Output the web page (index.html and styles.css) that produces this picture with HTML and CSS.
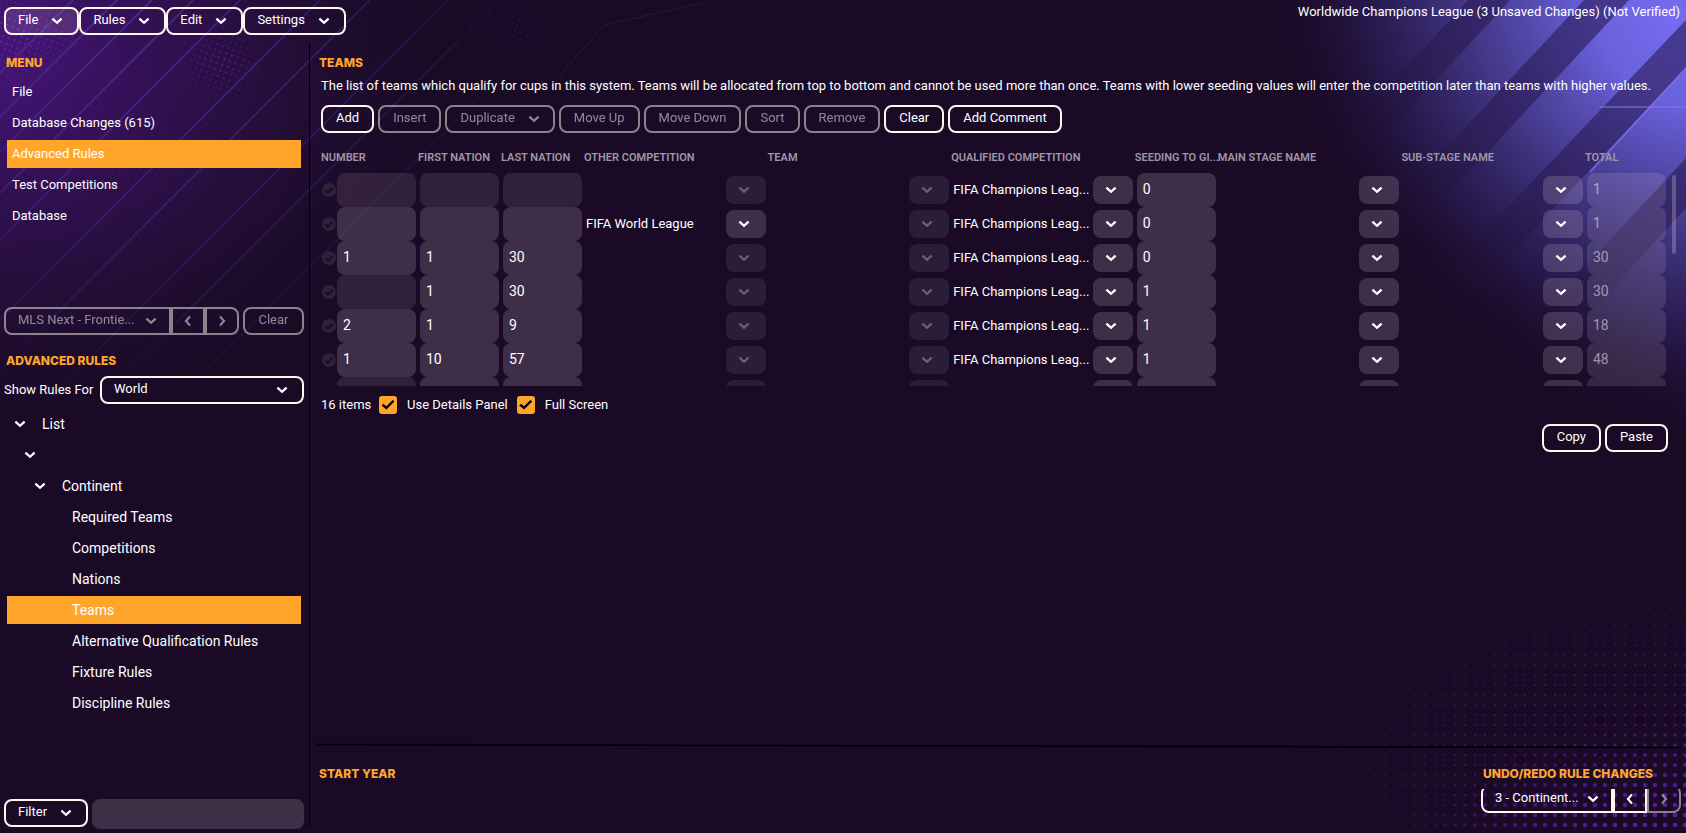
FILE: index.html
```html
<!DOCTYPE html>
<html lang="en">
<head>
<meta charset="utf-8">
<title>Worldwide Champions League</title>
<link rel="stylesheet" href="styles.css">
</head>
<body>
<svg class="defs" aria-hidden="true">
  <symbol id="chev" viewBox="0 0 12 12"><path d="M1.4 3.6 L6 7.8 L10.6 3.6" fill="none" stroke="currentColor" stroke-width="2.3"/></symbol>
  <symbol id="left" viewBox="0 0 12 12"><path d="M8 1.4 L4 6 L8 10.6" fill="none" stroke="currentColor" stroke-width="2.2"/></symbol>
  <symbol id="right" viewBox="0 0 12 12"><path d="M4 1.4 L8 6 L4 10.6" fill="none" stroke="currentColor" stroke-width="2.2"/></symbol>
  <symbol id="tick" viewBox="0 0 14 14"><circle cx="7" cy="7" r="7" fill="#2f2139"/><path d="M3.6 7.4 L6 9.6 L10.6 4.8" fill="none" stroke="#1b0c25" stroke-width="2"/></symbol>
</svg>

<svg class="backdrop" viewBox="0 0 1686 833" preserveAspectRatio="none" aria-hidden="true">
  <defs>
    <radialGradient id="purple" gradientUnits="userSpaceOnUse" cx="0" cy="0" r="1" gradientTransform="translate(-20 50) scale(480 390)">
      <stop offset="0" stop-color="#48167c"/><stop offset=".3" stop-color="#391260" stop-opacity=".9"/><stop offset=".65" stop-color="#28103f" stop-opacity=".7"/><stop offset="1" stop-color="#1a0a26" stop-opacity="0"/>
    </radialGradient>
    <radialGradient id="blue" gradientUnits="userSpaceOnUse" cx="0" cy="0" r="1" gradientTransform="translate(1675 20) rotate(-42) scale(370 480)">
      <stop offset="0" stop-color="#756cf0"/><stop offset=".2" stop-color="#6a61dc"/><stop offset=".5" stop-color="#4a3f98" stop-opacity=".85"/><stop offset=".75" stop-color="#2e2160" stop-opacity=".65"/><stop offset="1" stop-color="#1c0c30" stop-opacity="0"/>
    </radialGradient>
    <radialGradient id="bandFill" gradientUnits="userSpaceOnUse" cx="1686" cy="0" r="420">
      <stop offset="0" stop-color="#34256c" stop-opacity=".7"/><stop offset=".5" stop-color="#28184e" stop-opacity=".6"/><stop offset="1" stop-color="#1c0c2c" stop-opacity="0"/>
    </radialGradient>
    <radialGradient id="lineFade" gradientUnits="userSpaceOnUse" cx="120" cy="0" r="430">
      <stop offset="0" stop-color="#5a35a8" stop-opacity=".6"/><stop offset=".5" stop-color="#48309a" stop-opacity=".38"/><stop offset="1" stop-color="#3a2580" stop-opacity="0"/>
    </radialGradient>
    <pattern id="dots" width="10" height="10" patternUnits="userSpaceOnUse"><circle cx="5" cy="5" r="2.3" fill="#5a1a9c"/></pattern>
    <pattern id="fine" width="6" height="6" patternUnits="userSpaceOnUse" patternTransform="rotate(20)"><circle cx="3" cy="3" r="1.2" fill="#6a22b0"/></pattern>
    <pattern id="mini" width="10" height="10" patternUnits="userSpaceOnUse"><circle cx="5" cy="5" r="1.3" fill="#4c1888"/></pattern>
    <radialGradient id="fade"><stop offset="0" stop-color="#fff"/><stop offset="1" stop-color="#fff" stop-opacity="0"/></radialGradient>
    <radialGradient id="plateau"><stop offset=".4" stop-color="#fff"/><stop offset="1" stop-color="#fff" stop-opacity="0"/></radialGradient>
    <mask id="corner" maskUnits="userSpaceOnUse" x="0" y="0" width="1686" height="833"><ellipse cx="1710" cy="850" rx="290" ry="130" fill="url(#plateau)"/></mask>
    <mask id="wide" maskUnits="userSpaceOnUse" x="0" y="0" width="1686" height="833"><ellipse cx="1670" cy="770" rx="400" ry="210" fill="url(#fade)"/></mask>
    <mask id="tops" maskUnits="userSpaceOnUse" x="0" y="0" width="1686" height="833"><ellipse cx="10" cy="35" rx="85" ry="50" fill="url(#fade)"/><ellipse cx="222" cy="62" rx="50" ry="46" fill="url(#fade)" opacity=".65"/><ellipse cx="515" cy="25" rx="50" ry="34" fill="url(#fade)" opacity=".25"/><ellipse cx="110" cy="170" rx="260" ry="120" fill="url(#fade)" opacity=".2"/></mask>
  </defs>
  <rect width="1686" height="833" fill="#1a0a26"/>
  <rect width="620" height="480" fill="url(#purple)"/>
  <rect width="620" height="300" fill="url(#fine)" mask="url(#tops)"/>
  <g stroke="url(#lineFade)" stroke-width="2">
    <path d="M73 0L0 73M117 0L0 117M152 0L0 152M193 0L0 193M240 0L0 240M320 0L0 320M370 0L0 370M448 0L40 408M499 0L90 409M577 0L190 387"/>
  </g>
  <path d="M560 75L604 25L702 3" fill="none" stroke="#3a2560" stroke-opacity=".5"/>
  <rect x="1150" width="536" height="520" fill="url(#blue)"/>
  <g fill="url(#bandFill)">
    <path d="M1348 0H1380L1200 190H1168Z" opacity=".4"/>
    <path d="M1468 0H1510L1290 240H1248Z"/>
    <path d="M1584 0H1629L1350 300H1305Z"/>
    <path d="M1686 20V68L1420 350H1372Z"/>
    <path d="M1686 158V208L1560 345H1512Z"/>
  </g>
  <path d="M1686 68L1590 172" stroke="#8478f0" stroke-opacity=".6" stroke-width="2"/>
  <path d="M1600 107H1686" stroke="#8478f0" stroke-opacity=".5" stroke-width="2"/>
  <rect x="1200" y="500" width="486" height="333" fill="url(#mini)" mask="url(#wide)"/>
  <rect x="1300" y="660" width="386" height="173" fill="url(#dots)" mask="url(#corner)"/>
</svg>

<header class="topbar">
  <nav class="menus" aria-label="Main">
    <button class="btn menu lit">File<svg class="ic"><use href="#chev"/></svg></button>
    <button class="btn menu">Rules<svg class="ic"><use href="#chev"/></svg></button>
    <button class="btn menu">Edit<svg class="ic"><use href="#chev"/></svg></button>
    <button class="btn menu">Settings<svg class="ic"><use href="#chev"/></svg></button>
  </nav>
  <p class="status">Worldwide Champions League (3 Unsaved Changes) (Not Verified)</p>
</header>

<div class="shell">
  <aside class="side">
    <h2>Menu</h2>
    <ul class="list primary">
      <li><a href="#">File</a></li>
      <li><a href="#">Database Changes (615)</a></li>
      <li><a href="#" class="on">Advanced Rules</a></li>
      <li><a href="#">Test Competitions</a></li>
      <li><a href="#">Database</a></li>
    </ul>
    <div class="row history">
      <div class="group dim">
        <button class="seg grow" disabled><span>MLS Next - Frontie...</span><svg class="ic"><use href="#chev"/></svg></button>
        <button class="seg" disabled aria-label="Previous"><svg class="ic"><use href="#left"/></svg></button>
        <button class="seg" disabled aria-label="Next"><svg class="ic"><use href="#right"/></svg></button>
      </div>
      <button class="btn" disabled>Clear</button>
    </div>
    <h2>Advanced Rules</h2>
    <div class="row scope">
      <label for="scope">Show Rules For</label>
      <div class="pick"><select id="scope"><option>World</option></select><svg class="ic"><use href="#chev"/></svg></div>
    </div>
    <ul class="list tree">
      <li><a href="#" class="l1"><svg class="ic"><use href="#chev"/></svg>List</a></li>
      <li><a href="#" class="l2" aria-label="Group"><svg class="ic"><use href="#chev"/></svg></a></li>
      <li><a href="#" class="l3"><svg class="ic"><use href="#chev"/></svg>Continent</a></li>
      <li><a href="#" class="l4">Required Teams</a></li>
      <li><a href="#" class="l4">Competitions</a></li>
      <li><a href="#" class="l4">Nations</a></li>
      <li><a href="#" class="l4 on">Teams</a></li>
      <li><a href="#" class="l4">Alternative Qualification Rules</a></li>
      <li><a href="#" class="l4">Fixture Rules</a></li>
      <li><a href="#" class="l4">Discipline Rules</a></li>
    </ul>
    <div class="row filter">
      <button class="btn menu">Filter<svg class="ic"><use href="#chev"/></svg></button>
      <input type="text" aria-label="Filter">
    </div>
  </aside>

  <main class="main">
    <h2>Teams</h2>
    <p class="desc">The list of teams which qualify for cups in this system. Teams will be allocated from top to bottom and cannot be used more than once. Teams with lower seeding values will enter the competition later than teams with higher values.</p>
    <div class="tools">
      <button class="btn">Add</button>
      <button class="btn" disabled>Insert</button>
      <button class="btn menu" disabled>Duplicate<svg class="ic"><use href="#chev"/></svg></button>
      <button class="btn" disabled>Move Up</button>
      <button class="btn" disabled>Move Down</button>
      <button class="btn" disabled>Sort</button>
      <button class="btn" disabled>Remove</button>
      <button class="btn">Clear</button>
      <button class="btn">Add Comment</button>
    </div>

    <div class="gridwrap">
      <div class="clip">
      <table>
        <colgroup><col class="num"><col class="sm"><col class="sm"><col><col><col><col class="sm"><col><col><col class="sm"></colgroup>
        <thead>
          <tr><th>Number</th><th>First Nation</th><th>Last Nation</th><th>Other Competition</th><th>Team</th><th>Qualified Competition</th><th>Seeding To Gi...</th><th>Main Stage Name</th><th>Sub-Stage Name</th><th>Total</th></tr>
        </thead>
        <tbody id="rows"></tbody>
      </table>
      </div>
      <div class="scroll"></div>
    </div>

    <div class="foot">
      <span>16 items</span>
      <label><input type="checkbox" checked>Use Details Panel</label>
      <label><input type="checkbox" checked>Full Screen</label>
    </div>
    <div class="clipboard">
      <button class="btn">Copy</button>
      <button class="btn">Paste</button>
    </div>

    <svg class="rule" viewBox="0 0 1364 6" preserveAspectRatio="none" aria-hidden="true"><path d="M0 1.5L1364 4.5" stroke="#000" stroke-width="1.6"/></svg>
    <section class="bottom">
      <div><h2>Start Year</h2></div>
      <div class="undo">
        <h2>Undo/Redo Rule Changes</h2>
        <div class="cut">
          <div class="group">
            <button class="seg grow"><span>3 - Continent...</span><svg class="ic"><use href="#chev"/></svg></button>
            <button class="seg" aria-label="Undo"><svg class="ic"><use href="#left"/></svg></button>
            <button class="seg" disabled aria-label="Redo"><svg class="ic"><use href="#right"/></svg></button>
          </div>
        </div>
      </div>
    </section>
  </main>
</div>
<script src="rows.js"></script>
</body>
</html>
```

FILE: rows.js
```js
const rows = [
  { first: '', last: '', number: '', faint: ['number', 'first', 'last'], comp: '', seeding: 0, total: 1 },
  { first: '', last: '', number: '', faint: [], comp: 'FIFA World League', seeding: 0, total: 1 },
  { first: 1, last: 30, number: 1, faint: [], comp: '', seeding: 0, total: 30 },
  { first: 1, last: 30, number: '', faint: ['number'], comp: '', seeding: 1, total: 30 },
  { first: 1, last: 9, number: 2, faint: [], comp: '', seeding: 1, total: 18 },
  { first: 10, last: 57, number: 1, faint: [], comp: '', seeding: 1, total: 48 },
  { first: '', last: '', number: '', faint: ['number'], comp: '', seeding: '', total: '' },
];

const field = (row, key, label) =>
  `<input type="text" aria-label="${label}" value="${row[key]}"${row.faint.includes(key) ? ' class="faint"' : ''}${key === 'total' ? ' readonly class="total"' : ''}>`;

const combo = (text, label, enabled) =>
  `<div class="combo"><span>${text}</span><button aria-label="${label}"${enabled ? '' : ' disabled'}><svg class="ic"><use href="#chev"/></svg></button></div>`;

document.getElementById('rows').innerHTML = rows.map((row) => `<tr>
  <td><div class="first"><svg class="tick"><use href="#tick"/></svg>${field(row, 'number', 'Number')}</div></td>
  <td>${field(row, 'first', 'First nation')}</td>
  <td>${field(row, 'last', 'Last nation')}</td>
  <td>${combo(row.comp, 'Other competition', row.comp !== '')}</td>
  <td>${combo('', 'Team', false)}</td>
  <td>${combo(row.total === '' ? '' : 'FIFA Champions Leag...', 'Qualified competition', true)}</td>
  <td>${field(row, 'seeding', 'Seeding')}</td>
  <td>${combo('', 'Main stage name', true)}</td>
  <td>${combo('', 'Sub-stage name', true)}</td>
  <td>${field(row, 'total', 'Total')}</td>
</tr>`).join('');
```

FILE: styles.css
```css
* { box-sizing: border-box; }

body {
  margin: 0;
  min-height: 100vh;
  display: flex;
  flex-direction: column;
  background: #1a0a26;
  color: #fff;
  font: 13px/18px Roboto, "Liberation Sans", sans-serif;
}

.defs { position: absolute; width: 0; height: 0; }
.backdrop { position: absolute; z-index: -1; top: 0; left: 0; width: 100%; height: 100%; }

h2, p, ul { margin: 0; padding: 0; }
button, input, select { font: inherit; color: inherit; margin: 0; }

h2 {
  color: #ffa62a;
  font: 800 12px/16px Inter, sans-serif;
  text-transform: uppercase;
  padding-left: 2px;
}

.ic { width: 12px; height: 12px; flex: none; display: block; }

.btn {
  height: 28px;
  padding: 0 12px 3px;
  border: 2px solid #fff8ee;
  border-radius: 8px;
  background: none;
  white-space: nowrap;
}
.btn:disabled, .group.dim { opacity: .5; }
.menu { display: flex; align-items: center; gap: 13px; padding-right: 14px; }
.menu .ic { margin-top: 3px; }
.lit { background: rgba(255, 240, 255, .12); }

.topbar { display: flex; justify-content: space-between; padding: 7px 6px 8px 4px; }
.menus { display: flex; }
.status { margin-top: -4px; }

.shell { flex: 1; display: flex; }

.side {
  width: 310px;
  flex: none;
  display: flex;
  flex-direction: column;
  padding: 12px 5px 0 4px;
  margin-bottom: 6px;
  border-right: 1px solid #000;
}

.list { list-style: none; display: flex; flex-direction: column; gap: 3px; padding: 0 3px; }
.list a {
  display: flex;
  align-items: center;
  height: 28px;
  padding-left: 5px;
  color: inherit;
  text-decoration: none;
}
.list .on { background: #ffa62a; }
.primary { margin-top: 7px; }
.tree { margin-top: 6px; font-size: 14px; }
.tree a { gap: 16px; }
.tree .l1 { padding-left: 7px; }
.tree .l2 { padding-left: 17px; }
.tree .l3 { padding-left: 27px; }
.tree .l4 { padding-left: 65px; }

.row { display: flex; align-items: center; gap: 4px; }
.row .btn { min-width: 61px; }
.history { margin: 77px 0 18px; }
.group { flex: 1; display: flex; }
.seg {
  height: 28px;
  width: 34px;
  display: flex;
  align-items: center;
  justify-content: center;
  padding: 0;
  border: 2px solid #fff8ee;
  background: none;
  white-space: nowrap;
}
.seg.grow { flex: 1; justify-content: space-between; padding: 0 12px; border-radius: 8px 0 0 8px; }
.seg span { padding-bottom: 3px; }
.seg:last-child { border-radius: 0 8px 8px 0; }

.scope { margin-top: 7px; }
.scope label { white-space: nowrap; width: 92px; }
.pick { flex: 1; display: flex; align-items: center; height: 28px; border: 2px solid #fff8ee; border-radius: 8px; padding-right: 14px; }
.pick select { flex: 1; appearance: none; background: none; border: 0; padding: 0 12px 3px; outline: 0; }

.side .filter { align-items: flex-start; margin-top: auto; margin-bottom: -2px; }
.filter input {
  flex: 1;
  min-width: 0;
  height: 30px;
  border: 0;
  border-radius: 8px;
  background: #3e3046;
}

.main { flex: 1; min-width: 0; display: flex; flex-direction: column; padding: 12px 5px 0 7px; }
.desc { margin: 6px 0 10px 4px; }
.tools { display: flex; gap: 4px; padding-left: 4px; }
.tools .btn, .clipboard .btn { padding-left: 13px; padding-right: 13px; }

.gridwrap { display: flex; align-items: flex-start; gap: 4px; margin: 12px 0 0 4px; padding-right: 5px; }
.clip { flex: 1; height: 241px; overflow: hidden; }
.scroll { width: 4px; height: 79px; margin-top: 30px; border-radius: 2px; background: rgba(255, 255, 255, .22); }

table { width: 100%; table-layout: fixed; border-collapse: collapse; }
.num { width: 97px; }
.sm { width: 83px; }
th {
  height: 28px;
  padding: 0 0 3px;
  text-align: left;
  font-size: 11px;
  line-height: 14px;
  font-weight: 600;
  white-space: nowrap;
  text-transform: uppercase;
  color: #a096a8;
}
td { height: 34px; padding: 0 2px; }
td input {
  display: block;
  width: 100%;
  height: 34px;
  padding: 0 6px 2px;
  border: 0;
  border-radius: 8px;
  background: rgba(255, 238, 250, .16);
  font-size: 14px;
}
td .faint { background: rgba(255, 238, 250, .1); }
td .total { background: rgba(255, 238, 250, .12); color: rgba(255, 255, 255, .5); }
.first { display: flex; align-items: center; gap: 1px; margin-left: -1px; }
.first input { flex: 1; min-width: 0; }
.tick { width: 14px; height: 14px; flex: none; }
.combo { display: flex; align-items: center; justify-content: space-between; }
.combo span { white-space: nowrap; }
.combo button {
  width: 40px;
  height: 28px;
  flex: none;
  display: grid;
  place-items: center;
  padding: 0 4px 0 0;
  border: 0;
  border-radius: 8px;
  background: rgba(255, 238, 250, .16);
}
.combo button:disabled { background: rgba(255, 238, 250, .08); color: #6b5f72; }

.foot { display: flex; align-items: center; padding: 10px 0 0 4px; }
.foot span { width: 58px; }
.foot label { display: flex; align-items: center; gap: 10px; margin-right: 9px; }
.foot input {
  appearance: none;
  width: 18px;
  height: 18px;
  border-radius: 3px;
  background: #ffa62a;
  display: grid;
  place-items: center;
}
.foot input::before {
  content: "";
  width: 13px;
  height: 10px;
  background: #000;
  clip-path: polygon(0 55%, 15% 38%, 37% 62%, 86% 0, 100% 16%, 38% 96%);
}

.clipboard { display: flex; justify-content: flex-end; gap: 4px; padding: 10px 13px 0 0; }

.rule { width: 100%; height: 6px; margin-top: auto; flex: none; }
.bottom { display: flex; justify-content: space-between; padding-top: 17px; height: 84px; }
.undo { width: 200px; }
.cut { display: flex; align-items: flex-end; height: 24px; margin-top: 7px; overflow: hidden; }
.cut .seg:disabled { opacity: .5; }
```
